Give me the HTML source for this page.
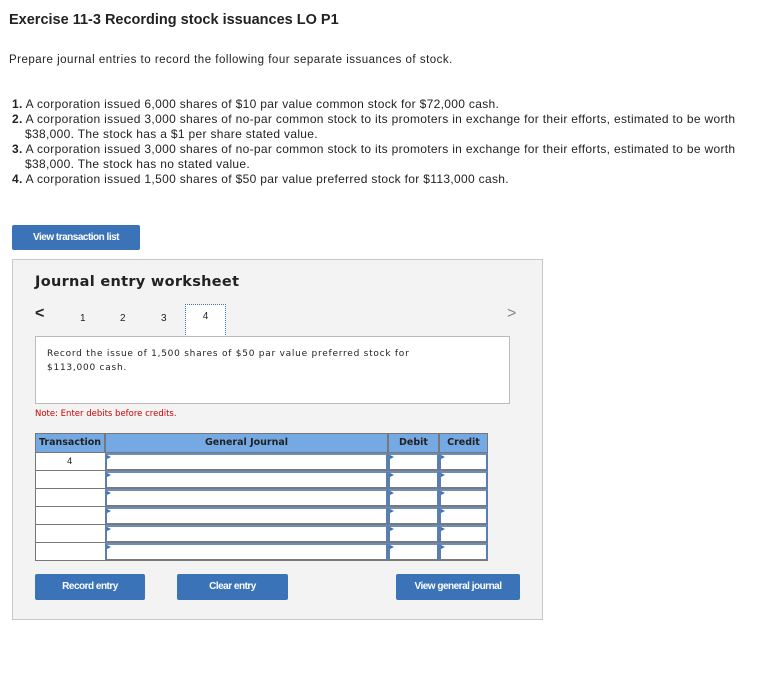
<!DOCTYPE html><html><head><style>
body{margin:0;width:759px;height:684px;background:#fff;font-family:"Liberation Sans",sans-serif;color:#222;position:relative;overflow:hidden}
.a{position:absolute}
.btn{position:absolute;background:#3b73b9;color:#fff;font-size:10px;font-weight:bold;text-align:center;border-radius:2px;letter-spacing:-0.5px}
.v{font-family:"DejaVu Sans",sans-serif}
.c{position:absolute;box-sizing:border-box}
.h{font-family:"DejaVu Sans",sans-serif;font-size:9.5px;font-weight:bold;text-align:center;line-height:18px;background:#75a9e3;border:1px solid #777;height:20px;top:433px}
</style></head><body>
<div class="a" style="left:9px;top:12px;font-size:14.5px;font-weight:bold;color:#222">Exercise 11-3 Recording stock issuances LO P1</div>
<div class="a" style="left:9px;top:54px;font-size:11.5px;letter-spacing:0.5px">Prepare journal entries to record the following four separate issuances of stock.</div>
<div class="a" style="left:12px;top:97px;font-size:12px;letter-spacing:0.32px;line-height:15px;width:747px">
<div><b>1.</b> A corporation issued 6,000 shares of $10 par value common stock for $72,000 cash.</div>
<div><b>2.</b> A corporation issued 3,000 shares of no-par common stock to its promoters in exchange for their efforts, estimated to be worth<br><span style="padding-left:13px">$38,000. The stock has a $1 per share stated value.</span></div>
<div><b>3.</b> A corporation issued 3,000 shares of no-par common stock to its promoters in exchange for their efforts, estimated to be worth<br><span style="padding-left:13px">$38,000. The stock has no stated value.</span></div>
<div><b>4.</b> A corporation issued 1,500 shares of $50 par value preferred stock for $113,000 cash.</div>
</div>
<div class="btn" style="left:12px;top:225px;width:128px;height:25px;line-height:25px">View transaction list</div>
<div class="a" style="left:12px;top:259px;width:529px;height:359px;background:#f3f3f3;border:1px solid #c8c8c8"></div>
<div class="a v" style="left:35px;top:274px;font-size:14.5px;font-weight:bold;color:#222;letter-spacing:0.3px">Journal entry worksheet</div>
<div class="a" style="left:35px;top:305px;font-size:16px;font-weight:bold">&lt;</div>
<div class="a" style="left:507px;top:305px;font-size:16px;color:#888">&gt;</div>
<div class="a" style="left:80px;top:313px;font-size:10px">1</div>
<div class="a" style="left:120px;top:313px;font-size:10px">2</div>
<div class="a" style="left:161px;top:313px;font-size:10px">3</div>
<div class="a" style="left:185px;top:304px;width:41px;height:33px;background:#fff;border:1px dotted #3b73b9;box-sizing:border-box;font-size:10px;text-align:center;padding-top:6px">4</div>
<div class="a v" style="left:35px;top:336px;width:475px;height:68px;background:#fff;border:1px solid #bbb;box-sizing:border-box;font-size:9px;letter-spacing:0.75px;line-height:14px;padding:10px 11px">Record the issue of 1,500 shares of $50 par value preferred stock for<br>$113,000 cash.</div>
<div class="a v" style="left:35px;top:409px;font-size:8.5px;color:#c00">Note: Enter debits before credits.</div>
<div class="c" style="left:35px;top:433px;width:453px;height:128px;background:#fff;border:1px solid #777"></div>
<div class="c h" style="left:35px;width:70px">Transaction</div>
<div class="c h" style="left:105px;width:283px">General Journal</div>
<div class="c h" style="left:388px;width:51px">Debit</div>
<div class="c h" style="left:439px;width:49px">Credit</div>
<div class="a v" style="left:67px;top:457px;font-size:8.5px">4</div>
<div id="rows"></div>
<script>
var h='';for(var i=0;i<6;i++){var y=453+i*18;
h+='<div class="c" style="left:35px;top:'+(y+17)+'px;width:70px;height:1px;background:#777"></div>';
[[105,283],[388,51],[439,49]].forEach(function(c){h+='<div class="c" style="left:'+c[0]+'px;top:'+y+'px;width:'+c[1]+'px;height:18px;border:2px solid #6a8fbf;border-color:#6a8fbf #5a7fae #7a7a7a #5a7fae"></div><div class="a" style="left:'+(c[0]+2)+'px;top:'+(y+2)+'px;width:0;height:0;border-left:4px solid #3b73b9;border-top:2px solid transparent;border-bottom:2px solid transparent"></div>';});}
document.getElementById('rows').innerHTML=h;
</script>
<div class="btn" style="left:35px;top:574px;width:110px;height:26px;line-height:26px">Record entry</div>
<div class="btn" style="left:177px;top:574px;width:111px;height:26px;line-height:26px">Clear entry</div>
<div class="btn" style="left:396px;top:574px;width:124px;height:26px;line-height:26px">View general journal</div>
</body></html>
